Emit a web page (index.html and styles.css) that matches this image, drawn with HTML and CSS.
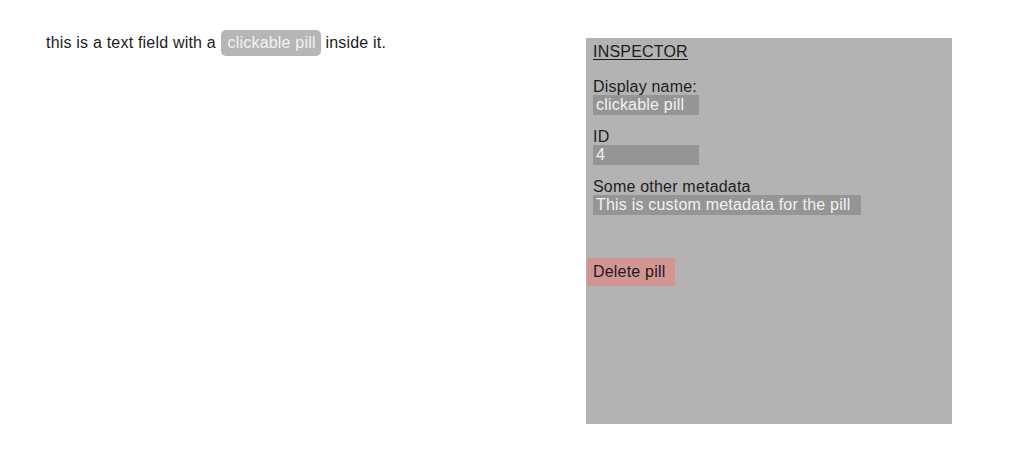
FILE: index.html
```html
<!DOCTYPE html>
<html>
<head>
<meta charset="utf-8">
<link rel="stylesheet" href="styles.css">
</head>
<body>
<div class="page">
  <div class="editor">
    this is a text field with a <span class="pill">clickable pill</span> inside it.
  </div>
  <div class="inspector">
    <div class="heading">INSPECTOR</div>
    <div class="field">
      <div class="label">Display name:</div>
      <div class="input short">clickable pill</div>
    </div>
    <div class="field">
      <div class="label">ID</div>
      <div class="input short">4</div>
    </div>
    <div class="field">
      <div class="label">Some other metadata</div>
      <div class="input long">This is custom metadata for the pill</div>
    </div>
    <div class="delete">Delete pill</div>
  </div>
</div>
</body>
</html>
```

FILE: styles.css
```css
html, body {
  margin: 0;
  padding: 0;
  background: #ffffff;
}

body {
  font-family: "Liberation Sans", Arial, sans-serif;
  font-size: 16px;
  letter-spacing: 0.2px;
  color: #1c1c1c;
}

.page {
  display: flex;
  align-items: flex-start;
  padding: 30px 0 0 46px;
}

.editor {
  width: 540px;
  line-height: 18px;
}

.pill {
  display: inline-block;
  background: #b6b6b6;
  color: #f2f2f2;
  border-radius: 5px;
  padding: 4px 5px 4px 7px;
  line-height: 18px;
}

.inspector {
  margin-top: 8px;
  width: 366px;
  height: 386px;
  box-sizing: border-box;
  background: #b3b3b3;
  padding: 5px 7px;
  line-height: 18px;
}

.heading {
  text-decoration: underline;
  text-underline-offset: 2px;
  margin-bottom: 18px;
}

.field {
  margin-bottom: 14px;
}

.label {
  color: #1e1e1e;
  line-height: 16px;
}

.input {
  background: #959595;
  color: #f2f2f2;
  padding: 1px 3px;
  box-sizing: border-box;
  height: 20px;
}

.short {
  width: 106px;
}

.long {
  width: 268px;
}

.delete {
  display: inline-block;
  margin-top: 29px;
  margin-left: -6px;
  background: #d39494;
  color: #1c1c1c;
  padding: 5px 10px 5px 6px;
}
```
